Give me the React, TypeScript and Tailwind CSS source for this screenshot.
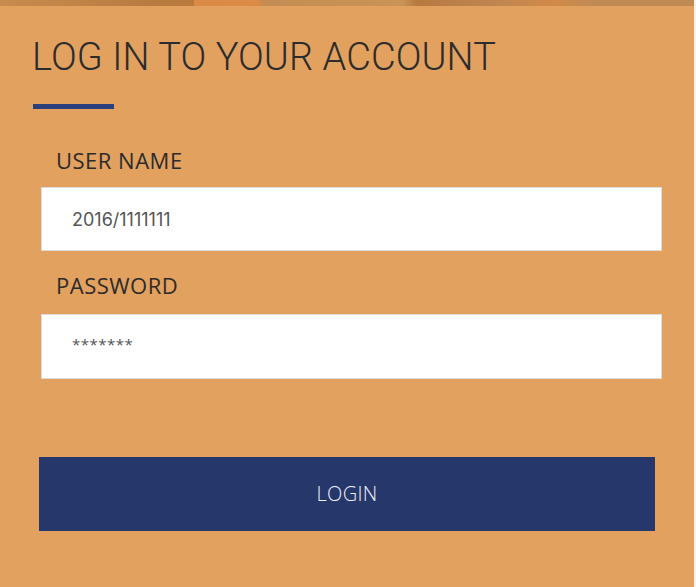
export default function App() {
  return (
    <div className="flex h-[587px] w-[696px] overflow-hidden bg-[#f2f2f2]">
      <div className="flex w-[694px] flex-col bg-[#e3a160]">
        <div className="h-[6px] w-full bg-[linear-gradient(90deg,#c88b4f_0%,#c28548_10%,#b87a40_22%,#b97a3c_28%,#d98a45_28%,#dc8c44_37%,#c48c52_38%,#c99456_58%,#b67a40_60%,#c18650_72%,#d08a48_80%,#c08a55_86%,#bf8a52_100%)]" />
        <h1 className="ml-[32px] mt-[28px] font-['Roboto'] text-[38px] font-light leading-[46px] tracking-[0.1px] text-[#2c2c2c]">
          LOG IN TO YOUR ACCOUNT
        </h1>
        <div className="ml-[33px] mt-[24px] h-[5px] w-[81px] bg-[#2b3f7a]" />
        <label className="ml-[56px] mt-[37px] font-['Open_Sans'] text-[22px] font-medium leading-[28px] tracking-[0.5px] text-[#2b2b2b]">
          USER NAME
        </label>
        <div className="ml-[41px] mt-[13px] flex h-[64px] w-[621px] items-center border border-[#dcdcdc] bg-white pl-[30px] font-['Inter'] text-[18px] text-[#555] [font-variant-numeric:proportional-nums]">
          2016/1111111
        </div>
        <label className="ml-[56px] mt-[20px] font-['Open_Sans'] text-[22px] font-medium leading-[28px] tracking-[0.5px] text-[#2b2b2b]">
          PASSWORD
        </label>
        <div className="ml-[41px] mt-[15px] flex h-[65px] w-[621px] items-center border border-[#dcdcdc] bg-white pl-[30px] pb-[4px] font-['Open_Sans'] text-[15px] tracking-[0.5px] text-[#555]">
          *******
        </div>
        <button className="ml-[39px] mt-[78px] flex h-[74px] w-[616px] items-center justify-center bg-[#26386b] font-['Open_Sans'] text-[20px] font-light tracking-[0.3px] text-[#eef0f6]">
          LOGIN
        </button>
      </div>
    </div>
  );
}
